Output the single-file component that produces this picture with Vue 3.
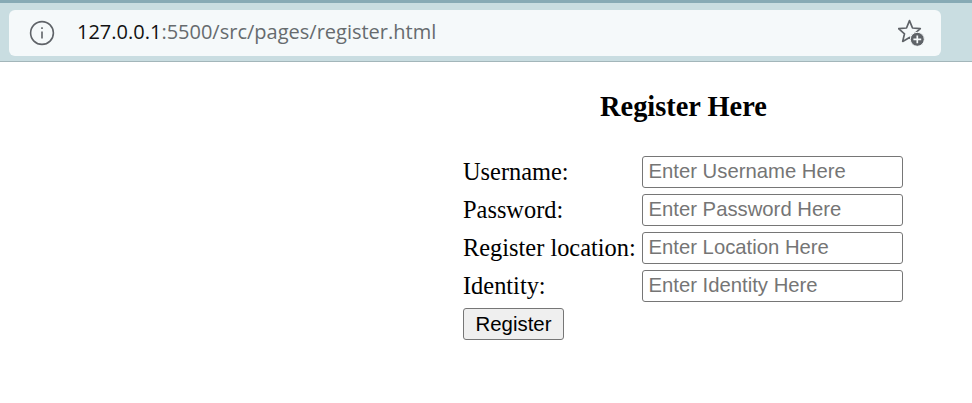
<template>
  <div class="page">
    <header class="toolbar">
      <div class="omnibox">
        <svg class="info" width="26" height="26" viewBox="0 0 26 26" fill="none" stroke="#5f6368" stroke-width="1.6">
          <circle cx="13" cy="13" r="11.4" />
          <path d="M13 11.5v7" />
          <path d="M13 7.2v1.8" />
        </svg>
        <div class="url"><span class="host">127.0.0.1</span>:5500/src/pages/register.html</div>
        <svg class="star" width="28" height="28" viewBox="0 0 28 28">
          <path d="M11.5 1.6l3 7.4 7.8.7-5.9 5.1 1.8 7.6-6.7-4-6.8 4 1.8-7.6L.6 9.7l7.9-.7z" fill="none" stroke="#5f6368" stroke-width="1.7" stroke-linejoin="round" />
          <circle cx="19.3" cy="20.3" r="7" fill="#5f6368" stroke="#f5f9fa" stroke-width="1" />
          <path d="M19.3 16.4v7.8M15.4 20.3h7.8" stroke="#f5f9fa" stroke-width="1.7" />
        </svg>
      </div>
    </header>
    <main class="content">
      <section class="panel">
        <h2 class="title">Register Here</h2>
        <form class="form" @submit.prevent>
          <template v-for="f in fields" :key="f.label">
            <label class="label">{{ f.label }}</label>
            <input class="field" type="text" :placeholder="f.placeholder" />
          </template>
          <button class="btn" type="button">Register</button>
        </form>
      </section>
    </main>
  </div>
</template>

<script setup>
const fields = [
  { label: 'Username:', placeholder: 'Enter Username Here' },
  { label: 'Password:', placeholder: 'Enter Password Here' },
  { label: 'Register location:', placeholder: 'Enter Location Here' },
  { label: 'Identity:', placeholder: 'Enter Identity Here' }
]
</script>

<style>
html, body { margin: 0; background: #fff; overflow: hidden; }
</style>

<style scoped>
.page { width: 972px; height: 403px; overflow: hidden; background: #fff; }
.toolbar {
  height: 58px;
  box-sizing: content-box;
  background: #c9dde1;
  border-top: 3px solid #87aab5;
  border-bottom: 1px solid #a3b6ba;
  padding: 0 31px 0 9px;
  display: flex;
  align-items: center;
}
.omnibox {
  flex: 1;
  height: 46px;
  margin-top: 1px;
  background: #f5f9fa;
  border-radius: 6px;
  display: flex;
  align-items: center;
  padding: 0 15px 0 20px;
}
.info { flex: none; }
.url {
  flex: 1;
  margin-left: 22px;
  padding-bottom: 3px;
  font-family: "Open Sans", sans-serif;
  font-size: 20px;
  color: #666b6e;
  white-space: nowrap;
}
.host { color: #111; }
.star { flex: none; }
.content { display: flex; justify-content: flex-start; padding-left: 463px; }
.panel { width: 441px; }
.title {
  margin: 30px 0 34px;
  font-family: "Liberation Serif", serif;
  font-size: 28.4px;
  font-weight: bold;
  line-height: 30px;
  color: #000;
  text-align: center;
}
.form {
  display: grid;
  grid-template-columns: 179px 261px;
  grid-auto-rows: 32px;
  row-gap: 6px;
  align-items: center;
}
.label {
  font-family: "Liberation Serif", serif;
  font-size: 24.4px;
  color: #000;
  white-space: nowrap;
}
.field {
  box-sizing: border-box;
  width: 261px;
  height: 32px;
  padding: 0 5.5px 2px;
  border: 1.3px solid #767676;
  border-radius: 3px;
  font-family: "Liberation Sans", sans-serif;
  font-size: 20.3px;
  background: #fff;
}
.field::placeholder { color: #757575; opacity: 1; }
.btn {
  grid-column: 1;
  justify-self: start;
  box-sizing: border-box;
  width: 101px;
  height: 32px;
  padding: 0;
  background: #efefef;
  border: 1.3px solid #767676;
  border-radius: 3px;
  font-family: "Liberation Sans", sans-serif;
  font-size: 20.4px;
  color: #000;
}
</style>
